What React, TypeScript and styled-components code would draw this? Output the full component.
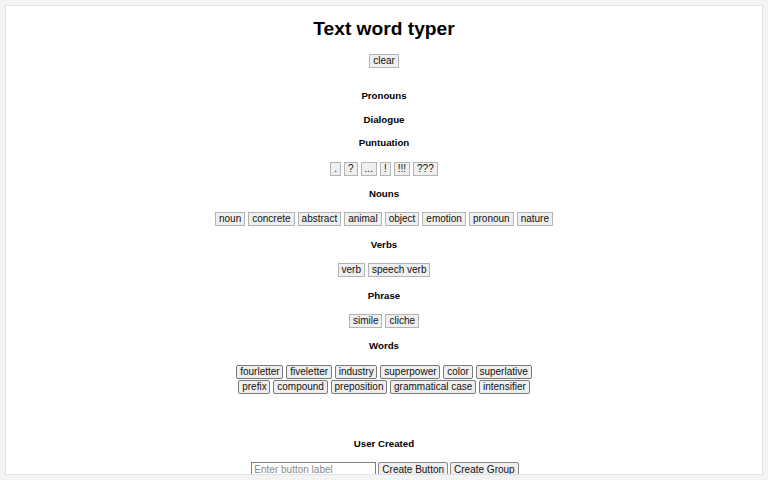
import React from 'react';
import styled, { createGlobalStyle, css } from 'styled-components';

const GlobalStyle = createGlobalStyle`
  html, body {
    margin: 0;
    padding: 0;
    background-color: #f3f3f3;
    font-family: 'Liberation Sans', Arial, sans-serif;
  }
`;

const Page = styled.div`
  padding: 5px;
  height: 480px;
  box-sizing: border-box;
`;

const Card = styled.main`
  height: 470px;
  box-sizing: border-box;
  background-color: #ffffff;
  border: 1px solid #e2e2e2;
  overflow: hidden;
  padding-top: 12px;
  text-align: center;
  color: #000000;
`;

const Title = styled.h1`
  margin: 0;
  font-size: 19.2px;
  line-height: 22px;
  font-weight: bold;
`;

const ClearRow = styled.div`
  display: flex;
  justify-content: center;
  margin-top: 13.5px;
  margin-bottom: 22.25px;
`;

const Heading = styled.h4<{ $spaceTop?: number }>`
  margin: ${({ $spaceTop }) => ($spaceTop ? `${$spaceTop}px` : '11.75px')} 0 11.75px;
  font-size: 9.7px;
  line-height: 12px;
  font-weight: bold;
`;

const ButtonRow = styled.div<{ $maxWidth?: number }>`
  display: flex;
  flex-wrap: wrap;
  justify-content: center;
  gap: 1px 3px;
  padding: 0.625px 0;
  margin: 0 auto;
  max-width: ${({ $maxWidth }) => ($maxWidth ? `${$maxWidth}px` : 'none')};
`;

const WordButton = styled.button<{ $strong?: boolean }>`
  font-family: 'Liberation Sans', Arial, sans-serif;
  font-size: 10px;
  line-height: 12px;
  height: 14px;
  padding: 0 3px;
  margin: 0;
  color: #111111;
  background-color: #efefef;
  border: 1px solid #b4b4b4;
  border-radius: 0;
  cursor: pointer;

  ${({ $strong }) =>
    $strong &&
    css`
      padding: 0 2.8px;
      border-color: #7a7a7a;
      border-radius: 2px;
    `}
`;

const CreateRow = styled.div`
  display: flex;
  justify-content: center;
  align-items: center;
  gap: 2px;
  padding-left: 2px;
`;

const LabelInput = styled.input`
  box-sizing: border-box;
  width: 125px;
  height: 15px;
  margin: 0;
  padding: 0 2px;
  font-family: 'Liberation Sans', Arial, sans-serif;
  font-size: 10px;
  border: 1px solid #808080;
  border-radius: 0;

  &::placeholder {
    color: #8a8a8a;
  }
`;

const CreateButton = styled(WordButton)`
  height: 15px;
  padding: 0 3px;
  font-size: 10px;
  border-color: #8a8a8a;
  border-radius: 2px;
`;

interface IGroup {
  title: string;
  words: string[];
  strong?: boolean;
  maxWidth?: number;
}

const GROUPS: IGroup[] = [
  { title: 'Pronouns', words: [] },
  { title: 'Dialogue', words: [] },
  { title: 'Puntuation', words: ['.', '?', '...', '!', '!!!', '???'] },
  {
    title: 'Nouns',
    words: ['noun', 'concrete', 'abstract', 'animal', 'object', 'emotion', 'pronoun', 'nature'],
  },
  { title: 'Verbs', words: ['verb', 'speech verb'] },
  { title: 'Phrase', words: ['simile', 'cliche'] },
  {
    title: 'Words',
    strong: true,
    maxWidth: 310,
    words: [
      'fourletter',
      'fiveletter',
      'industry',
      'superpower',
      'color',
      'superlative',
      'prefix',
      'compound',
      'preposition',
      'grammatical case',
      'intensifier',
    ],
  },
];

const App = () => {
  return (
    <>
      <GlobalStyle />
      <Page>
        <Card>
          <Title>Text word typer</Title>
          <ClearRow>
            <WordButton>clear</WordButton>
          </ClearRow>
          {GROUPS.map((group) => (
            <section key={group.title}>
              <Heading>{group.title}</Heading>
              {group.words.length > 0 && (
                <ButtonRow $maxWidth={group.maxWidth}>
                  {group.words.map((word) => (
                    <WordButton key={word} $strong={group.strong}>
                      {word}
                    </WordButton>
                  ))}
                </ButtonRow>
              )}
            </section>
          ))}
          <Heading $spaceTop={44}>User Created</Heading>
          <CreateRow>
            <LabelInput placeholder="Enter button label" />
            <CreateButton>Create Button</CreateButton>
            <CreateButton>Create Group</CreateButton>
          </CreateRow>
        </Card>
      </Page>
    </>
  );
};

export default App;
